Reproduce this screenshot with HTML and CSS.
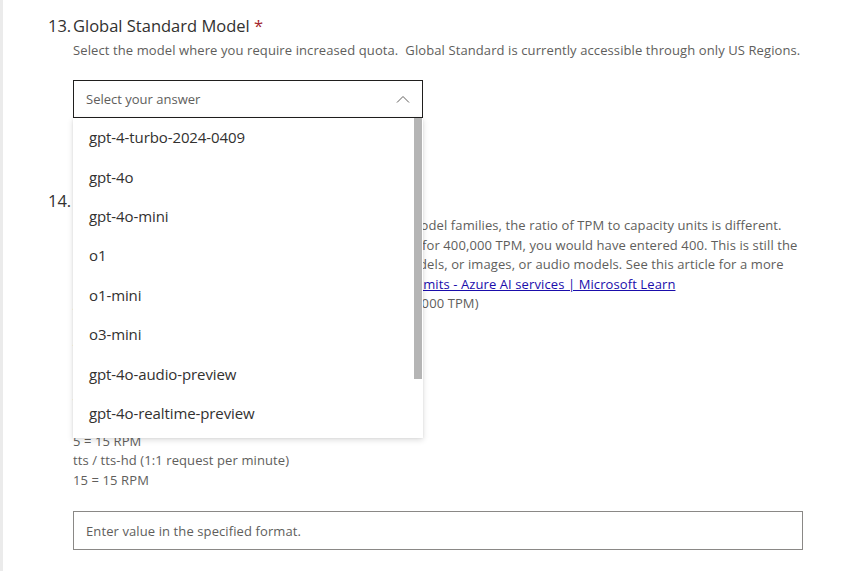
FILE: index.html
```html
<!DOCTYPE html>
<html lang="en">
<head>
<meta charset="utf-8">
<title>Quota request form</title>
<link rel="stylesheet" href="styles.css">
</head>
<body>
<div class="page">
  <div class="rail"></div>
  <main class="content">
    <section class="question q13">
      <div class="qnum">13.</div>
      <div class="qbody">
        <h2 class="qtitle">Global Standard Model <span class="req">*</span></h2>
        <p class="qdesc">Select the model where you require increased quota.&nbsp; Global Standard is currently accessible through only US Regions.</p>
        <div class="select-wrap">
          <div class="select">
            <span class="placeholder">Select your answer</span>
            <svg class="chev" width="14" height="8" viewBox="0 0 14 8"><path d="M1 7.5 L7 1.5 L13 7.5" fill="none" stroke="#605e5c" stroke-width="1"/></svg>
          </div>
          <ul class="dropdown">
            <li>gpt-4-turbo-2024-0409</li>
            <li>gpt-4o</li>
            <li>gpt-4o-mini</li>
            <li>o1</li>
            <li>o1-mini</li>
            <li>o3-mini</li>
            <li>gpt-4o-audio-preview</li>
            <li>gpt-4o-realtime-preview</li>
          </ul>
          <div class="thumb"></div>
        </div>
      </div>
    </section>
    <section class="question q14">
      <div class="qnum">14.</div>
      <div class="qbody">
        <h2 class="qtitle">Capacity Units <span class="req">*</span></h2>
        <p class="qdesc body">Please enter the capacity units you need. For different model families, the ratio of TPM to capacity units is different.<br>
        Previously, you entered the TPM values in thousands, so for 400,000 TPM, you would have entered 400. This is still the<br>
        case for GPT-4 / gpt-4o models, but not with o-series models, or images, or audio models. See this article for a more<br>
        detailed breakdown: <a href="#">Azure OpenAI Service Quotas and Limits - Azure AI services | Microsoft Learn</a><br>
        gpt-4-turbo / gpt-4o / gpt-4o-mini / o1 / o3-mini (1 CU = 1000 TPM)<br>
        o1-mini (1 = 1000 TPM)<br>
        400 = 400,000 TPM<br>
        dall-e-3 (1 = 6 RPM)<br>
        10 = 60 RPM<br>
        whisper (1 = 3 RPM)<br>
        Example:<br>
        5 = 15 RPM<br>
        tts / tts-hd (1:1 request per minute)<br>
        15 = 15 RPM</p>
        <div class="textbox">Enter value in the specified format.</div>
      </div>
    </section>
  </main>
</div>
</body>
</html>
```
FILE: styles.css
```css
* { box-sizing: border-box; }
html, body { margin: 0; padding: 0; background: #ffffff; }
body {
  font-family: "Open Sans", "Noto Sans", sans-serif;
  color: #323130;
  width: 853px;
  height: 571px;
  overflow: hidden;
}
.page { display: flex; min-height: 571px; }
.rail { width: 3px; background: #ebebeb; flex: none; }
.content { flex: 1; background: #fff; padding: 14px 0 0 45px; }
.question { display: flex; }
.qnum { width: 25px; flex: none; font-size: 16.5px; line-height: 24px; }
.qbody { width: 730px; }
.qtitle { margin: 0; font-size: 16.5px; line-height: 24px; font-weight: 400; }
.req { color: #a4262c; }
.qdesc { margin: 3px 0 0; font-size: 13px; line-height: 19.6px; color: #605e5c; letter-spacing: 0.1px; }
.select-wrap { position: relative; width: 350px; margin-top: 19px; }
.select {
  height: 38px;
  border: 1px solid #201f1e;
  display: flex;
  align-items: center;
  justify-content: space-between;
  padding: 0 12px 0 12px;
  font-size: 13px;
  color: #605e5c;
}
.dropdown {
  position: absolute;
  top: 38px;
  left: 0;
  width: 350px;
  height: 320px;
  margin: 0;
  padding: 0;
  list-style: none;
  background: #fff;
  box-shadow: 0 2px 6px rgba(0,0,0,0.14), 0 0 2px rgba(0,0,0,0.08);
  z-index: 5;
}
.dropdown li {
  height: 39.4px;
  display: flex;
  align-items: center;
  padding-left: 16px;
  font-size: 15px;
  color: #323130;
  letter-spacing: -0.1px;
}
.thumb {
  position: absolute;
  right: 1px;
  top: 38px;
  width: 8px;
  height: 261px;
  background: #b5b5b5;
  z-index: 6;
}
.q13 { height: 175px; }
.q14 .qdesc { white-space: nowrap; }
.qdesc a { color: #1a0dab; text-decoration: underline; }
.textbox {
  margin-top: 21px;
  height: 39px;
  border: 1px solid #8a8886;
  display: flex;
  align-items: center;
  padding-left: 12px;
  font-size: 13px;
  color: #605e5c;
  letter-spacing: 0.1px;
}
```
